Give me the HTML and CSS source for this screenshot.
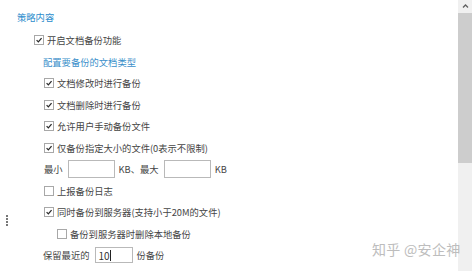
FILE: index.html
```html
<!DOCTYPE html>
<html lang="zh-CN">
<head>
<meta charset="utf-8">
<link rel="stylesheet" href="styles.css">
</head>
<body>
<div class="page">
  <div class="pane">
    <div class="heading">策略内容</div>
    <div class="form">
      <div class="row ind1"><span class="cb on"><svg viewBox="0 0 10 10"><path d="M2 5.2 L4.2 7.4 L8.2 2.6" /></svg></span><span>开启文档备份功能</span></div>
      <div class="row ind2 link">配置要备份的文档类型</div>
      <div class="row ind3"><span class="cb on"><svg viewBox="0 0 10 10"><path d="M2 5.2 L4.2 7.4 L8.2 2.6" /></svg></span><span>文档修改时进行备份</span></div>
      <div class="row ind3"><span class="cb on"><svg viewBox="0 0 10 10"><path d="M2 5.2 L4.2 7.4 L8.2 2.6" /></svg></span><span>文档删除时进行备份</span></div>
      <div class="row ind3"><span class="cb on"><svg viewBox="0 0 10 10"><path d="M2 5.2 L4.2 7.4 L8.2 2.6" /></svg></span><span>允许用户手动备份文件</span></div>
      <div class="row ind3"><span class="cb on"><svg viewBox="0 0 10 10"><path d="M2 5.2 L4.2 7.4 L8.2 2.6" /></svg></span><span>仅备份指定大小的文件(0表示不限制)</span></div>
      <div class="row ind3 sizes"><span>最小</span><span class="box wide"></span><span>KB、最大</span><span class="box wide"></span><span>KB</span></div>
      <div class="row ind3"><span class="cb"></span><span>上报备份日志</span></div>
      <div class="row ind3"><span class="cb on"><svg viewBox="0 0 10 10"><path d="M2 5.2 L4.2 7.4 L8.2 2.6" /></svg></span><span>同时备份到服务器(支持小于20M的文件)</span></div>
      <div class="row ind4"><span class="cb"></span><span>备份到服务器时删除本地备份</span></div>
      <div class="row ind2 retain"><span>保留最近的</span><span class="box small">10<i class="caret"></i></span><span>份备份</span></div>
    </div>
  </div>
  <div class="scrollbar">
    <div class="arrow"><svg viewBox="0 0 13 13"><path d="M4 7.5 L6.5 5 L9 7.5" /></svg></div>
    <div class="thumb"></div>
    <div class="track"></div>
  </div>
  <div class="splitter"><i></i><i></i><i></i><i></i></div>
  <div class="watermark">知乎 @安企神</div>
</div>
</body>
</html>
```
FILE: styles.css
```css
* { box-sizing: border-box; }
html, body { margin: 0; padding: 0; background: #fff; }
body {
  width: 474px;
  height: 271px;
  overflow: hidden;
  font-family: "Noto Sans CJK SC", "Microsoft YaHei", sans-serif;
  font-size: 9.3px;
  color: #454545;
}
.page {
  position: relative;
  display: flex;
  width: 474px;
  height: 271px;
  padding-right: 2px;
}
.pane {
  flex: 1;
  padding: 7px 0 0 17px;
}
.heading {
  height: 20px;
  line-height: 20px;
  color: #2b8ccc;
  margin-bottom: 3px;
}
.form {
  display: flex;
  flex-direction: column;
  gap: 1.5px;
}
.row {
  height: 20px;
  display: flex;
  align-items: center;
  white-space: nowrap;
}
.ind1 { padding-left: 17px; }
.ind2 { padding-left: 26px; }
.ind3 { padding-left: 27px; }
.ind4 { padding-left: 40px; }
.link { color: #3a8fca; }
.cb {
  width: 10px;
  height: 10px;
  border: 1px solid #a8a8a8;
  background: #fff;
  margin-right: 3px;
  flex: none;
  display: flex;
}
.cb svg { width: 8px; height: 8px; }
.cb path {
  fill: none;
  stroke: #2a2a2a;
  stroke-width: 1.6;
}
.box {
  border: 1px solid #b9b9b9;
  background: #fff;
  flex: none;
}
.sizes .box.wide {
  width: 47px;
  height: 18px;
  margin: 0 4px 0 5px;
}
.retain .box.small {
  width: 38px;
  height: 16px;
  margin: 0 4px 0 5px;
  padding-left: 3px;
  display: flex;
  align-items: center;
  color: #333;
  font-size: 10px;
}
.caret {
  display: inline-block;
  width: 1px;
  height: 11px;
  background: #222;
  margin-left: 0.5px;
}
.scrollbar {
  width: 14px;
  display: flex;
  flex-direction: column;
  background: #f0f0f0;
}
.arrow { height: 13px; display: flex; justify-content: center; }
.arrow svg { width: 13px; height: 13px; }
.arrow path { fill: none; stroke: #606060; stroke-width: 1.3; }
.thumb { height: 150px; background: #cdcdcd; }
.track { flex: 1; background: #f0f0f0; }
.splitter {
  position: absolute;
  left: 6px;
  top: 215px;
  display: flex;
  flex-direction: column;
  gap: 1.5px;
}
.splitter i {
  display: block;
  width: 2px;
  height: 1.5px;
  background: #777;
}
.watermark {
  position: absolute;
  left: 372px;
  top: 240px;
  font-size: 14px;
  line-height: 18px;
  color: #bdbdbd;
  letter-spacing: 0.3px;
}
```
